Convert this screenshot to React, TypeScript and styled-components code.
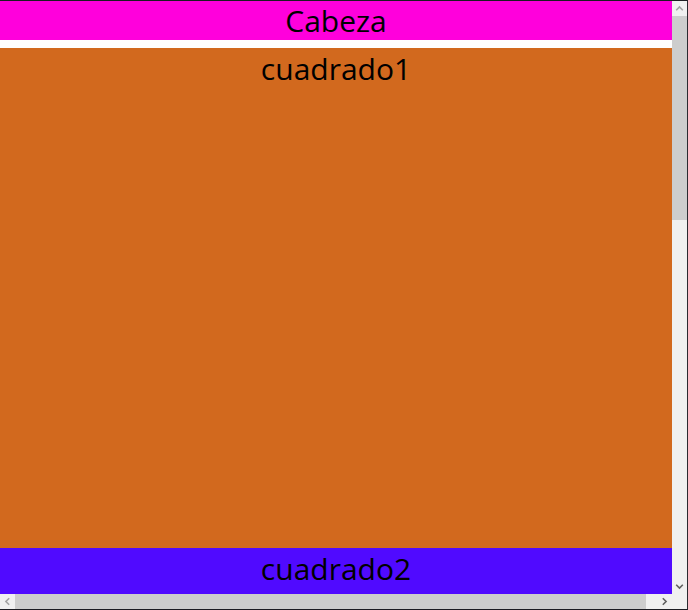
import React from "react";
import styled, { createGlobalStyle } from "styled-components";

const Global = createGlobalStyle`
  html, body { margin: 0; padding: 0; background: #ffffff; overflow: hidden; }
  body { font-family: "Open Sans", "Noto Sans", sans-serif; }
`;

const Frame = styled.div`
  box-sizing: border-box;
  width: 688px;
  height: 610px;
  border-top: 1px solid #1c1c22;
  border-bottom: 1px solid #1c1c22;
  border-right: 1px solid #2a2a30;
  display: grid;
  grid-template-columns: 1fr 15px;
  grid-template-rows: 1fr 15px;
  background: #ffffff;
`;

const Viewport = styled.div`
  overflow: hidden;
  min-width: 0;
  min-height: 0;
`;

const Page = styled.div`
  width: 672px;
  display: flex;
  flex-direction: column;
`;

const Block = styled.div<{ $bg: string; $h: number; $gap?: number }>`
  background: ${(p) => p.$bg};
  height: ${(p) => p.$h}px;
  margin-top: ${(p) => p.$gap ?? 0}px;
  flex: none;
  color: #000;
  font-family: "Open Sans", "Noto Sans", sans-serif;
  font-size: 30px;
  font-weight: 500;
  line-height: ${(p) => (p.$h < 41 ? p.$h : 41)}px;
  text-align: center;
`;

const Bar = styled.div<{ $dir: "v" | "h" }>`
  display: flex;
  flex-direction: ${(p) => (p.$dir === "v" ? "column" : "row")};
  background: #f0f0f0;
`;

const ArrowBtn = styled.div`
  flex: none;
  width: 15px;
  height: 15px;
  display: flex;
  align-items: center;
  justify-content: center;
  background: #f0f0f0;
`;

const Thumb = styled.div<{ $dir: "v" | "h"; $size: number }>`
  flex: none;
  background: #cdcdcd;
  ${(p) => (p.$dir === "v" ? `height: ${p.$size}px;` : `width: ${p.$size}px;`)}
`;

const Track = styled.div`
  flex: 1;
`;

const Corner = styled.div`
  background: #f0f0f0;
`;

const Chevron = ({ rot, color }: { rot: number; color: string }) => (
  <svg width="9" height="9" viewBox="0 0 9 9" style={{ transform: `rotate(${rot}deg)` }}>
    <path d="M1.2 6.2 L4.5 2.9 L7.8 6.2" fill="none" stroke={color} strokeWidth="1.6" />
  </svg>
);

export default function App() {
  return (
    <>
      <Global />
      <Frame>
        <Viewport>
          <Page>
            <Block $bg="#ff00dc" $h={39}>Cabeza</Block>
            <Block $bg="#d2691e" $h={500} $gap={8}>cuadrado1</Block>
            <Block $bg="#500aff" $h={500}>cuadrado2</Block>
          </Page>
        </Viewport>
        <Bar $dir="v">
          <ArrowBtn>
            <Chevron rot={0} color="#a3a3a3" />
          </ArrowBtn>
          <Thumb $dir="v" $size={204} />
          <Track />
          <ArrowBtn>
            <Chevron rot={180} color="#606060" />
          </ArrowBtn>
        </Bar>
        <Bar $dir="h">
          <ArrowBtn>
            <Chevron rot={-90} color="#a3a3a3" />
          </ArrowBtn>
          <Thumb $dir="h" $size={631} />
          <Track />
          <ArrowBtn>
            <Chevron rot={90} color="#606060" />
          </ArrowBtn>
        </Bar>
        <Corner />
      </Frame>
    </>
  );
}
